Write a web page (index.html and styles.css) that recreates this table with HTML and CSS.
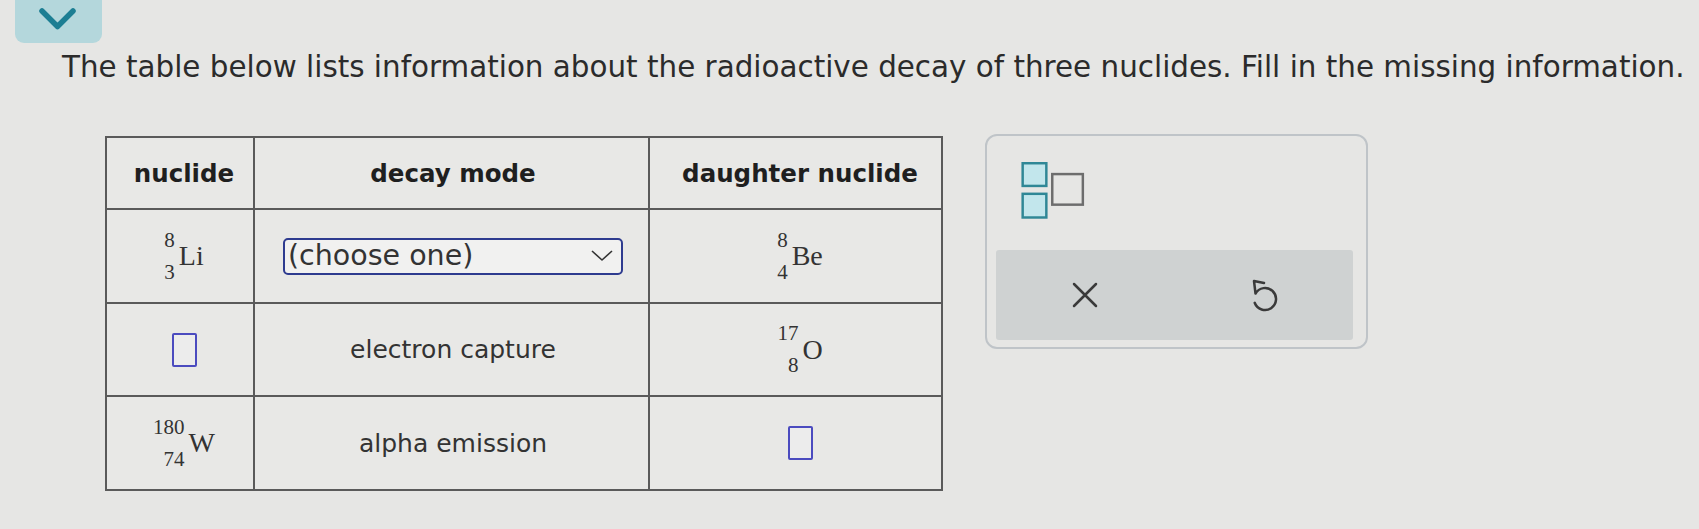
FILE: index.html
```html
<!DOCTYPE html>
<html lang="en">
<head>
<meta charset="utf-8">
<title>Radioactive decay</title>
<link rel="stylesheet" href="styles.css">
</head>
<body>
<div class="toggle">
  <svg class="toggle-icon" width="87" height="43" viewBox="0 0 87 43"><path d="M27 11 L42.5 26.5 L58 11" fill="none" stroke="#1c7e93" stroke-width="5.5" stroke-linecap="round" stroke-linejoin="round"/></svg>
</div>
<p class="prompt">The table below lists information about the radioactive decay of three nuclides. Fill in the missing information.</p>
<div class="main">
  <div class="grid">
    <div class="cell head c1">nuclide</div>
    <div class="cell head c2">decay mode</div>
    <div class="cell head c3">daughter nuclide</div>

    <div class="cell c1"><span class="nuc"><span class="iso"><span>8</span><span>3</span></span><span class="sym">Li</span></span></div>
    <div class="cell c2">
      <div class="select"><span class="select-text">(choose one)</span>
        <svg class="select-arrow" width="22" height="12" viewBox="0 0 22 12"><path d="M1 1 L11 10 L21 1" fill="none" stroke="#333" stroke-width="1.6" stroke-linejoin="round"/></svg>
      </div>
    </div>
    <div class="cell c3"><span class="nuc"><span class="iso"><span>8</span><span>4</span></span><span class="sym">Be</span></span></div>

    <div class="cell c1"><span class="blank"></span></div>
    <div class="cell c2 text">electron capture</div>
    <div class="cell c3"><span class="nuc"><span class="iso"><span>17</span><span>8</span></span><span class="sym">O</span></span></div>

    <div class="cell c1"><span class="nuc"><span class="iso"><span>180</span><span>74</span></span><span class="sym">W</span></span></div>
    <div class="cell c2 text">alpha emission</div>
    <div class="cell c3"><span class="blank"></span></div>
  </div>

  <div class="panel">
    <svg class="frac-icon" width="64" height="58" viewBox="0 0 64 58">
      <rect x="1.25" y="1.25" width="24" height="23" fill="#c2e6ec" stroke="#2f8796" stroke-width="2.5"/>
      <rect x="1.25" y="32.25" width="24" height="24" fill="#c2e6ec" stroke="#2f8796" stroke-width="2.5"/>
      <rect x="31.25" y="12.25" width="31" height="31" fill="none" stroke="#6d6d6d" stroke-width="2.5"/>
    </svg>
    <div class="bar">
      <div class="btn">
        <svg width="26" height="26" viewBox="0 0 26 26"><path d="M2 2 L24 24 M24 2 L2 24" stroke="#3a3a3a" stroke-width="2.5" stroke-linecap="round"/></svg>
      </div>
      <div class="btn">
        <svg width="30" height="36" viewBox="0 0 30 36"><path d="M15 6 L5 4 L6.5 16.5 A11 11 0 1 1 5.7 25.8" fill="none" stroke="#3a3a3a" stroke-width="2.5" stroke-linecap="round" stroke-linejoin="round"/></svg>
      </div>
    </div>
  </div>
</div>
</body>
</html>
```

FILE: styles.css
```css
html, body {
  margin: 0;
  padding: 0;
}
body {
  background: #e6e6e4;
  font-family: "DejaVu Sans", Verdana, sans-serif;
  color: #2b2b2b;
  width: 1699px;
  height: 529px;
  overflow: hidden;
}
.toggle {
  margin-left: 15px;
  width: 87px;
  height: 43px;
  background: #b4d7dc;
  border-radius: 0 0 9px 9px;
}
.toggle-icon {
  display: block;
}
.prompt {
  margin: 7px 0 0 62px;
  font-size: 29.4px;
  line-height: 34px;
  white-space: nowrap;
  color: #2b2b2b;
}
.main {
  display: flex;
  align-items: flex-start;
  margin-top: 50px;
}
.grid {
  display: grid;
  grid-template-columns: 146px 393px 291px;
  grid-template-rows: 70px 92px 91px 92px;
  gap: 2px;
  padding: 2px;
  background: #5a5a5a;
  margin-left: 105px;
  margin-top: 2px;
}
.cell {
  background: #e8e8e6;
  display: flex;
  align-items: center;
  justify-content: center;
  font-size: 25px;
  color: #333;
}
.cell.c1 { padding-left: 8px; }
.cell.c2 { padding-left: 3px; }
.cell.c3 { padding-left: 9px; }
.cell.head {
  font-weight: bold;
  font-size: 24.5px;
  color: #1f1f1f;
}
.nuc {
  display: inline-flex;
  align-items: center;
  font-family: "Liberation Serif", "Times New Roman", serif;
  color: #333;
}
.iso {
  display: flex;
  flex-direction: column;
  align-items: flex-end;
  font-size: 21px;
  line-height: 21px;
  gap: 11px;
}
.sym {
  font-size: 28px;
  line-height: 1;
  margin-left: 4px;
}
.blank {
  display: block;
  width: 25px;
  height: 34px;
  box-sizing: border-box;
  border: 2px solid #4b4bbf;
  border-radius: 2px;
  background: #ececec;
}
.select {
  box-sizing: border-box;
  width: 340px;
  height: 37px;
  border: 2px solid #2e3b8f;
  border-radius: 5px;
  background: #f1f1f0;
  display: flex;
  align-items: center;
  justify-content: space-between;
  padding: 0 8px 0 3px;
}
.select-text {
  font-size: 28.5px;
  line-height: 1;
  color: #333;
}
.select-arrow {
  display: block;
}
.panel {
  box-sizing: border-box;
  margin-left: 42px;
  width: 383px;
  height: 215px;
  border: 2px solid #bfc4c8;
  border-radius: 12px;
  padding: 0 13px 7px 9px;
  display: flex;
  flex-direction: column;
}
.frac-icon {
  display: block;
  margin: 26px 0 0 25px;
}
.bar {
  margin-top: 31px;
  height: 91px;
  background: #cfd2d2;
  border-radius: 3px;
  display: flex;
}
.btn {
  flex: 1;
  display: flex;
  align-items: center;
  justify-content: center;
}
```
